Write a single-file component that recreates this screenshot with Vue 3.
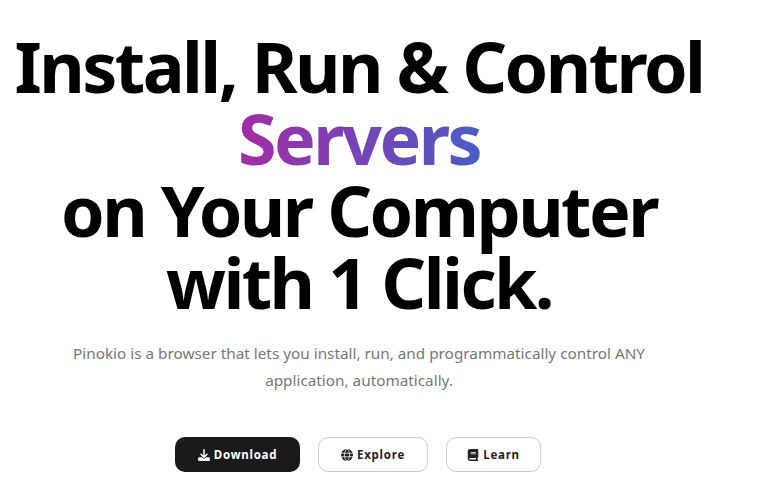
<script setup>
const buttons = [
  { label: 'Download', primary: true, icon: 'download' },
  { label: 'Explore', primary: false, icon: 'globe' },
  { label: 'Learn', primary: false, icon: 'book' }
]
</script>

<template>
  <main class="hero">
    <h1 class="title">
      <span class="line">Install, Run &amp; Control</span>
      <span class="line grad">Servers</span>
      <span class="line">on Your Computer</span>
      <span class="line">with 1 Click.</span>
    </h1>
    <p class="sub">Pinokio is a browser that lets you install, run, and programmatically control ANY application, automatically.</p>
    <div class="actions">
      <a v-for="b in buttons" :key="b.label" class="btn" :class="[b.primary ? 'primary' : 'ghost', b.icon]">
        <svg v-if="b.icon === 'download'" viewBox="0 0 512 512" class="ico"><path fill="currentColor" d="M288 32c0-17.700-14.300-32-32-32s-32 14.300-32 32v242.700l-73.400-73.400c-12.500-12.500-32.800-12.500-45.300 0s-12.500 32.800 0 45.300l128 128c12.500 12.500 32.800 12.500 45.300 0l128-128c12.500-12.500 12.500-32.800 0-45.300s-32.800-12.500-45.300 0L288 274.700V32zM64 352c-35.300 0-64 28.700-64 64v32c0 35.300 28.700 64 64 64h384c35.300 0 64-28.700 64-64v-32c0-35.300-28.700-64-64-64H346.500l-45.300 45.300c-25 25-65.500 25-90.500 0L165.500 352H64z"/></svg>
        <svg v-else-if="b.icon === 'globe'" viewBox="0 0 24 24" class="ico"><circle cx="12" cy="12" r="12" fill="currentColor"/><path d="M0 8.500h24M0 15.500h24M12 0c-7 6-7 18 0 24M12 0c7 6 7 18 0 24" fill="none" stroke="#fff" stroke-width="1.500"/></svg>
        <svg v-else viewBox="0 0 448 512" class="ico"><path fill="currentColor" d="M96 0C43 0 0 43 0 96v320c0 53 43 96 96 96h320c17.700 0 32-14.300 32-32s-14.300-32-32-32v-64c17.700 0 32-14.300 32-32V32c0-17.700-14.300-32-32-32H96zm0 384h256v64H96c-17.700 0-32-14.300-32-32s14.300-32 32-32zm32-240c0-8.800 7.200-16 16-16h192c8.800 0 16 7.200 16 16s-7.200 16-16 16H144c-8.800 0-16-7.200-16-16zm16 48h192c8.800 0 16 7.200 16 16s-7.200 16-16 16H144c-8.800 0-16-7.200-16-16s7.200-16 16-16z"/></svg>
        <span>{{ b.label }}</span>
      </a>
    </div>
  </main>
</template>

<style>
html, body { margin: 0; background: #fff; overflow: hidden; }
</style>

<style scoped>
.hero {
  width: 718px;
  height: 499px;
  display: flex;
  flex-direction: column;
  align-items: center;
  font-family: "Noto Sans", "Open Sans", sans-serif;
  overflow: hidden;
}
.title {
  margin: 30px 0 0;
  font-size: 70px;
  line-height: 72px;
  font-weight: 700;
  color: #000;
  text-align: center;
  letter-spacing: -2.55px;
  white-space: nowrap;
}
.line { display: block; }
.grad {
  width: fit-content;
  margin: 0 auto;
  background: linear-gradient(90deg, #a32ca6, #4a5cc4);
  -webkit-background-clip: text;
  background-clip: text;
  color: transparent;
}
.sub {
  width: 600px;
  margin: 22px 0 0;
  font-size: 15.3px;
  line-height: 27px;
  color: #777;
  text-align: center;
}
.actions {
  display: flex;
  gap: 18px;
  margin: 43px 2px 0 0;
}
.btn {
  height: 35px;
  box-sizing: border-box;
  border-radius: 10px;
  display: flex;
  align-items: center;
  justify-content: center;
  gap: 4px;
  font-size: 11.5px;
  font-weight: 700;
  letter-spacing: 0.75px;
}
.primary { background: #1a1a1a; color: #fff; width: 125px; }
.ghost { border: 1px solid #ccc; color: #222; }
.globe { width: 110px; }
.book { width: 95px; }
.ico { width: 12px; height: 12px; }
</style>
